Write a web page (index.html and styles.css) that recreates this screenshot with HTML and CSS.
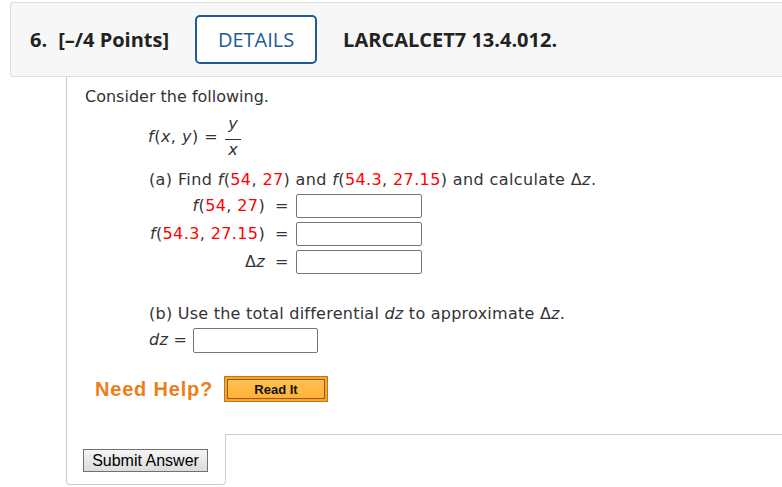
FILE: index.html
```html
<!DOCTYPE html>
<html lang="en">
<head>
<meta charset="utf-8">
<title>Question 6</title>
<link rel="stylesheet" href="styles.css">
</head>
<body>
<header class="qhead">
  <span class="qnum">6.</span>
  <span class="qpts">[–/4 Points]</span>
  <button class="details" type="button">DETAILS</button>
  <span class="qref">LARCALCET7 13.4.012.</span>
</header>
<div class="qbody">
  <div class="qcontent">
    <p class="intro">Consider the following.</p>
    <div class="formula">
      <span class="flabel"><i>f</i>(<i>x</i>, <i>y</i>) =</span>
      <span class="frac"><span class="num"><i>y</i></span><span class="den"><i>x</i></span></span>
    </div>
    <p class="part">(a) Find <i>f</i>(<span class="r">54</span>, <span class="r">27</span>) and <i>f</i>(<span class="r">54.3</span>, <span class="r">27.15</span>) and calculate Δ<i>z</i>.</p>
    <div class="answers">
      <span class="lbl"><i>f</i>(<span class="r">54</span>, <span class="r">27</span>)</span><span class="eq">=</span><input class="box" type="text">
      <span class="lbl"><i>f</i>(<span class="r">54.3</span>, <span class="r">27.15</span>)</span><span class="eq">=</span><input class="box" type="text">
      <span class="lbl">Δ<i>z</i></span><span class="eq">=</span><input class="box" type="text">
    </div>
    <p class="partb">(b) Use the total differential <i>dz</i> to approximate Δ<i>z</i>.</p>
    <div class="dzrow"><span><i>dz</i> =</span><input class="box" type="text"></div>
    <div class="help">
      <span class="need">Need Help?</span>
      <button class="readit" type="button"><span>Read It</span></button>
    </div>
  </div>
  <div class="qfoot">
    <div class="submit-cell"><button class="submit" type="button">Submit Answer</button></div>
    <div class="filler"></div>
  </div>
</div>
</body>
</html>
```
FILE: styles.css
```css
html, body {
  margin: 0;
  padding: 0;
}
body {
  font-family: "DejaVu Sans", Verdana, sans-serif;
  font-size: 16px;
  color: #333;
  background: #fff;
  overflow: hidden;
}
.qhead {
  margin: 2px 0 0 10px;
  height: 75px;
  box-sizing: border-box;
  border: 1px solid #ddd;
  border-right: none;
  border-radius: 3px 0 0 3px;
  background: #f7f7f7;
  display: flex;
  align-items: center;
  padding-left: 19px;
  font-family: "Open Sans", sans-serif;
  font-size: 20px;
  color: #222;
}
.qnum {
  font-weight: 700;
  margin-right: 11px;
}
.qpts {
  font-weight: 700;
}
.details {
  margin-left: 26px;
  width: 122px;
  height: 49px;
  box-sizing: border-box;
  border: 2px solid #1d5a97;
  border-radius: 5px;
  background: #fff;
  color: #1d5a97;
  font: 400 20px "Open Sans", sans-serif;
  padding: 0;
}
.qref {
  margin-left: 26px;
  font-weight: 700;
}
.qbody {
  margin-left: 66px;
}
.qcontent {
  border-left: 1px solid #ccc;
  padding: 10px 0 30px 18px;
}
.intro {
  margin: 0;
  line-height: 20px;
}
.r {
  color: #f00;
}
.formula {
  display: flex;
  align-items: flex-start;
  margin: 9px 0 0 63px;
}
.flabel {
  line-height: 20px;
  margin-top: 11px;
  white-space: pre;
  letter-spacing: 0.5px;
}
.frac {
  display: inline-flex;
  flex-direction: column;
  align-items: stretch;
  text-align: center;
  margin-left: 7px;
}
.num {
  line-height: 16px;
  padding: 0 3px 7px;
  border-bottom: 1px solid #333;
}
.den {
  line-height: 16px;
  padding-top: 2px;
}
.part {
  margin: 12px 0 0 64px;
  line-height: 20px;
  letter-spacing: 0.38px;
}
.answers {
  margin: 2px 0 0 64px;
  display: grid;
  grid-template-columns: 116px auto auto;
  grid-auto-rows: 28px;
  align-items: center;
  justify-content: start;
}
.lbl {
  text-align: right;
  line-height: 20px;
  white-space: nowrap;
  letter-spacing: 0.38px;
}
.eq {
  padding: 0 8px 0 10px;
  line-height: 20px;
}
.box {
  display: block;
  width: 126px;
  height: 24px;
  box-sizing: border-box;
  border: 1px solid #777;
  border-radius: 2px;
  padding: 0;
  margin: 0;
  background: #fff;
}
.partb {
  margin: 28px 0 0 64px;
  line-height: 20px;
  letter-spacing: 0.25px;
}
.dzrow {
  margin: 2px 0 0 64px;
  display: flex;
  align-items: center;
  height: 28px;
  line-height: 20px;
  letter-spacing: 0.3px;
}
.dzrow .box {
  margin-left: 6px;
  width: 125px;
  height: 25px;
}
.help {
  margin: 20px 0 0 10px;
  display: flex;
  align-items: center;
  height: 30px;
}
.need {
  font: 700 20px "Liberation Sans", Arial, sans-serif;
  letter-spacing: 0.8px;
  color: #ee7d16;
}
.readit {
  margin-left: 11px;
  width: 104px;
  height: 26px;
  box-sizing: border-box;
  border: 1px solid #c8731c;
  background: #f8a431;
  padding: 2px;
  border-radius: 0;
}
.readit span {
  display: flex;
  align-items: center;
  justify-content: center;
  height: 100%;
  box-sizing: border-box;
  border: 1px solid #9a5a14;
  background: linear-gradient(#ffc24f, #ffb236);
  font: 700 13px "Liberation Sans", Arial, sans-serif;
  color: #111;
}
.qfoot {
  display: flex;
}
.submit-cell {
  width: 160px;
  box-sizing: border-box;
  border: 1px solid #ccc;
  border-top: none;
  border-radius: 0 0 4px 4px;
  padding: 15px 0 12px 16px;
}
.filler {
  flex: 1;
  border-top: 1px solid #ccc;
}
.submit {
  display: block;
  width: 125px;
  height: 23px;
  box-sizing: border-box;
  border: 1px solid #707070;
  border-radius: 0;
  background: linear-gradient(#f5f5f5, #dcdcdc);
  font: 16px "Liberation Sans", Arial, sans-serif;
  color: #000;
  padding: 0;
}
```
